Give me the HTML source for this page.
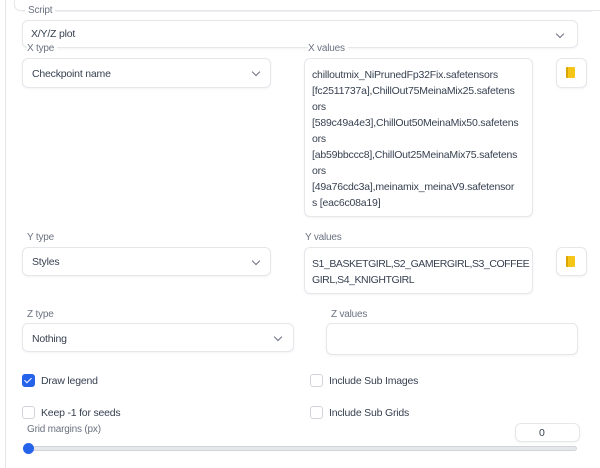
<!DOCTYPE html>
<html><head><meta charset="utf-8"><style>
*{margin:0;padding:0;box-sizing:border-box}
body{width:600px;height:468px;background:#fff;position:relative;overflow:hidden;font-family:"Liberation Sans",sans-serif;font-size:10.5px;color:#374151;letter-spacing:-0.2px}
.a{position:absolute}
.box{position:absolute;border:1px solid #e5e7eb;border-radius:6px;background:#fff;box-shadow:0 1px 2px rgba(0,0,0,.05)}
.lbl{position:absolute;font-size:10px;color:#6b7280;white-space:nowrap}
.txt{position:absolute;white-space:nowrap;color:#374151}
.chev{position:absolute;width:6px;height:6px;border-right:1.3px solid #6b7280;border-bottom:1.3px solid #6b7280;transform:rotate(45deg)}
.cb{position:absolute;width:13px;height:13px;border:1px solid #d1d5db;border-radius:3px;background:#fff}
.note{position:absolute;width:9px;height:11px;background:#f5c518;border-radius:1px;border-left:2px solid #d9a400}
</style></head><body>
<div class="a" style="left:5px;top:0;width:1px;height:468px;background:#e5e7eb"></div>
<div class="a" style="left:14px;top:-10px;width:600px;height:21px;border:1px solid #e5e7eb;border-radius:6px"></div>
<div class="a" style="left:22px;top:11px;width:570px;height:1px;background:#eef0f3"></div>
<div class="lbl" style="left:25px;top:5px;background:#fff;padding:0 3px">Script</div>
<div class="box" style="left:22px;top:20px;width:556px;height:28px"></div>
<div class="txt" style="left:31px;top:28px">X/Y/Z plot</div>
<div class="chev" style="left:557px;top:31px"></div>

<div class="lbl" style="left:27px;top:43px;background:#fff;padding-right:3px">X type</div>
<div class="box" style="left:22px;top:58px;width:249px;height:30px"></div>
<div class="txt" style="left:32px;top:68px">Checkpoint name</div>
<div class="chev" style="left:253px;top:69px"></div>
<div class="lbl" style="left:308px;top:43px;background:#fff;padding-right:3px">X values</div>
<div class="box" style="left:304px;top:58px;width:229px;height:159px"></div>
<div class="txt" style="left:312px;top:67px;line-height:16px;white-space:pre">chilloutmix_NiPrunedFp32Fix.safetensors
[fc2511737a],ChillOut75MeinaMix25.safetens
ors
[589c49a4e3],ChillOut50MeinaMix50.safetens
ors
[ab59bbccc8],ChillOut25MeinaMix75.safetens
ors
[49a76cdc3a],meinamix_meinaV9.safetensor
s [eac6c08a19]</div>
<div class="box" style="left:556px;top:58px;width:31px;height:30px"></div>
<div class="note" style="left:566px;top:67px"></div>

<div class="lbl" style="left:27px;top:232px">Y type</div>
<div class="box" style="left:22px;top:247px;width:249px;height:29px"></div>
<div class="txt" style="left:32px;top:256px">Styles</div>
<div class="chev" style="left:253px;top:258px"></div>
<div class="lbl" style="left:305px;top:232px">Y values</div>
<div class="box" style="left:304px;top:247px;width:229px;height:47px"></div>
<div class="txt" style="left:312px;top:256px;line-height:16px;white-space:pre;letter-spacing:-0.45px">S1_BASKETGIRL,S2_GAMERGIRL,S3_COFFEE
GIRL,S4_KNIGHTGIRL</div>
<div class="box" style="left:556px;top:247px;width:31px;height:29px"></div>
<div class="note" style="left:566px;top:256px"></div>

<div class="lbl" style="left:27px;top:309px">Z type</div>
<div class="box" style="left:22px;top:323px;width:272px;height:29px"></div>
<div class="txt" style="left:32px;top:333px">Nothing</div>
<div class="chev" style="left:275px;top:334px"></div>
<div class="lbl" style="left:331px;top:309px">Z values</div>
<div class="box" style="left:326px;top:323px;width:252px;height:32px"></div>

<div class="cb" style="left:22px;top:374px;background:#2563eb;border-color:#2563eb"></div>
<div class="a" style="left:26px;top:376px;width:4px;height:7px;border-right:1.6px solid #fff;border-bottom:1.6px solid #fff;transform:rotate(45deg)"></div>
<div class="txt" style="left:41px;top:375px">Draw legend</div>
<div class="cb" style="left:310px;top:374px"></div>
<div class="txt" style="left:329px;top:375px">Include Sub Images</div>
<div class="cb" style="left:22px;top:406px"></div>
<div class="txt" style="left:41px;top:407px">Keep -1 for seeds</div>
<div class="cb" style="left:310px;top:406px"></div>
<div class="txt" style="left:329px;top:407px">Include Sub Grids</div>
<div class="lbl" style="left:27px;top:424px">Grid margins (px)</div>
<div class="box" style="left:515px;top:423px;width:65px;height:19px"></div>
<div class="txt" style="left:539px;top:427px">0</div>
<div class="a" style="left:25px;top:446px;width:552px;height:5px;border:1px solid #d1d5db;border-radius:3px;background:#e5e7eb"></div>
<div class="a" style="left:23px;top:443px;width:11px;height:11px;border-radius:50%;background:#2563eb"></div>
</body></html>
